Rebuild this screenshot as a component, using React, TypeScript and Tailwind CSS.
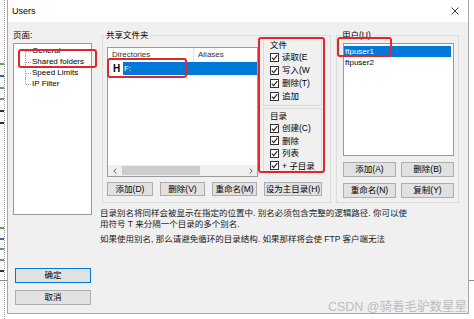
import React from "react";

const FONT = "font-['Liberation_Sans','Noto_Sans_CJK_SC',sans-serif]";

const Check = () => (
  <svg width="9" height="9" viewBox="0 0 9 9" className="shrink-0">
    <rect x="0.5" y="0.5" width="8" height="8" fill="white" stroke="#333" />
    <path d="M1.8 4.6 L3.7 6.6 L7.3 2.2" fill="none" stroke="#222" strokeWidth="1.1" />
  </svg>
);

const CheckRow = ({ label, h = "h-[13px]" }: { label: string; h?: string }) => (
  <div className={`flex ${h} items-center gap-[3px]`}>
    <Check />
    <span className="whitespace-nowrap text-[8.5px] leading-none">{label}</span>
  </div>
);

const TreeRow = ({ label, pos }: { label: string; pos: "first" | "mid" | "last" }) => (
  <div className="flex h-[11px] items-center">
    <div className="relative h-full w-[18px] shrink-0">
      <div
        className={`absolute left-[11px] w-0 border-l border-dotted border-[#a0a0a0] ${
          pos === "first" ? "top-1/2 bottom-0" : pos === "last" ? "top-0 h-1/2" : "top-0 bottom-0"
        }`}
      />
      <div className="absolute left-[12px] top-1/2 w-[5px] border-t border-dotted border-[#a0a0a0]" />
    </div>
    <span className="whitespace-nowrap text-[8px] leading-none">{label}</span>
  </div>
);

const Btn = ({ label, w, h = "h-[14px]", focus = false }: { label: string; w: string; h?: string; focus?: boolean }) => (
  <div
    className={`${w} ${h} flex shrink-0 items-center justify-center border bg-[#e1e1e1] text-[8.5px] leading-none ${
      focus ? "border-[#0078d7]" : "border-[#adadad]"
    }`}
  >
    {label}
  </div>
);

const Red = ({ c }: { c: string }) => (
  <div className={`pointer-events-none absolute rounded-[3px] border-2 border-[#e3262b] ${c}`} />
);

export default function App() {
  const marks: { y: number; c: string }[] = [
    { y: 63, c: "bg-[#5aa05a]" },
    { y: 75, c: "bg-[#4a5aa8]" },
    { y: 87, c: "bg-[#5aa05a]" },
    { y: 98, c: "bg-[#5aa05a]" },
    { y: 110, c: "bg-[#333]" },
    { y: 122, c: "bg-[#333]" },
    { y: 227, c: "bg-[#5aa05a]" },
    { y: 238, c: "bg-[#4a5aa8]" },
    { y: 248, c: "bg-[#5aa05a]" },
    { y: 259, c: "bg-[#5aa05a]" },
    { y: 270, c: "bg-[#333]" },
  ];
  return (
    <div className={`flex h-[319px] w-[474px] overflow-hidden bg-white text-black ${FONT}`}>
      {/* left desktop strip */}
      <div className="relative h-full w-[7px] shrink-0">
        <div className="absolute left-[4px] top-0 h-full border-l border-dotted border-[#9a9a9a]" />
        {marks.map((m, i) => (
          <div key={i} className={`absolute left-0 h-[2px] w-[4px] ${m.c}`} style={{ top: m.y }} />
        ))}
        <div className="absolute left-0 top-[280px] h-px w-[7px] bg-[#8a8a8a]" />
      </div>

      {/* dialog */}
      <div className="relative flex h-[314px] w-[462px] shrink-0 flex-col border border-t-0 border-[#a7a7a7] bg-[#f0f0f0]">
        {/* title bar */}
        <div className="flex h-[22px] shrink-0 items-center justify-between bg-white pl-[4px] pr-[9px]">
          <span className="text-[9px] leading-none">Users</span>
          <svg width="8" height="8" viewBox="0 0 8 8">
            <path d="M0.5 0.5 L7.5 7.5 M7.5 0.5 L0.5 7.5" stroke="#222" strokeWidth="0.9" />
          </svg>
        </div>

        {/* body */}
        <div className="flex flex-1">
          {/* left column */}
          <div className="flex w-[89px] shrink-0 flex-col pl-[5px]">
            <div className="mt-[7px] h-[13px] text-[8.5px] leading-[13px]">页面:</div>
            <div className="mt-[1px] h-[172px] w-[79px] border border-[#9a9a9a] bg-white pt-[1px]">
              <TreeRow label="General" pos="first" />
              <TreeRow label="Shared folders" pos="mid" />
              <TreeRow label="Speed Limits" pos="mid" />
              <TreeRow label="IP Filter" pos="last" />
            </div>
            <div className="ml-[2px] mt-[53px]">
              <Btn label="确定" w="w-[76px]" h="h-[15px]" focus />
            </div>
            <div className="ml-[2px] mt-[7px]">
              <Btn label="取消" w="w-[76px]" h="h-[15px]" />
            </div>
          </div>

          {/* right area */}
          <div className="flex flex-1 flex-col">
            <div className="ml-[5px] flex items-start gap-[5px]">
              {/* shared folders */}
              <fieldset className="mt-[7px] w-[229px] border border-[#dcdcdc] px-[3px] pb-[6px]">
                <legend className="pr-[2px] text-[8.5px] leading-[13px]">共享文件夹</legend>
                <div className="flex items-start">
                  <div className="ml-[1px] mt-[5px] flex h-[130px] w-[151px] flex-col border border-[#9a9a9a] bg-white">
                    <div className="flex h-[13px] shrink-0 text-[8px] leading-none text-[#333]">
                      <div className="flex w-[86px] items-center border-r border-[#e3e3e3] pl-[4px]">Directories</div>
                      <div className="flex items-center pl-[4px]">Aliases</div>
                    </div>
                    <div className="mt-[1px] flex h-[13px] items-center pl-[5px]">
                      <span className="w-[10px] text-[10px] font-bold leading-none">H</span>
                      <div className="flex h-full flex-1 items-center bg-[#0078d7] pl-[1px] text-[8px] leading-none text-white">
                        F:
                      </div>
                    </div>
                    <div className="flex-1" />
                    <div className="flex h-[11px] items-center bg-[#f0f0f0]">
                      <div className="flex w-[13px] justify-center">
                        <svg width="4" height="6" viewBox="0 0 4 6">
                          <path d="M3.2 0.5 L0.8 3 L3.2 5.5" fill="none" stroke="#606060" strokeWidth="1" />
                        </svg>
                      </div>
                      <div className="ml-[1px] h-[9px] w-[78px] bg-[#cdcdcd]" />
                      <div className="flex-1" />
                      <div className="flex w-[13px] justify-center">
                        <svg width="4" height="6" viewBox="0 0 4 6">
                          <path d="M0.8 0.5 L3.2 3 L0.8 5.5" fill="none" stroke="#606060" strokeWidth="1" />
                        </svg>
                      </div>
                    </div>
                  </div>
                  {/* permissions */}
                  <div className="-mt-[4px] ml-[5px] flex w-[59px] flex-col gap-[2px]">
                    <div className="h-[68px] border border-[#dcdcdc] pl-[6px] pt-[1px]">
                      <div className="h-[11px] text-[8.5px] leading-[11px]">文件</div>
                      <CheckRow label="读取(E" />
                      <CheckRow label="写入(W" />
                      <CheckRow label="删除(T)" />
                      <CheckRow label="追加" />
                    </div>
                    <div className="h-[64px] border border-[#dcdcdc] pl-[6px] pt-[1px]">
                      <div className="h-[12px] text-[8.5px] leading-[12px]">目录</div>
                      <CheckRow label="创建(C)" h="h-[12.5px]" />
                      <CheckRow label="删除" h="h-[12.5px]" />
                      <CheckRow label="列表" h="h-[12.5px]" />
                      <CheckRow label="+ 子目录" h="h-[12.5px]" />
                    </div>
                  </div>
                </div>
                <div className="ml-[1px] mt-[5px] flex gap-[7px]">
                  <Btn label="添加(D)" w="w-[46px]" />
                  <Btn label="删除(V)" w="w-[45px]" />
                  <Btn label="重命名(M)" w="w-[45px]" />
                  <Btn label="设为主目录(H)" w="w-[58px]" />
                </div>
              </fieldset>

              {/* users */}
              <fieldset className="mt-[7px] w-[123px] border border-[#dcdcdc] pb-[4px] pl-[5px] pr-[3px]">
                <legend className="pr-[2px] text-[8.5px] leading-[13px]">用户(U)</legend>
                <div className="ml-[1px] mt-[1px] h-[113px] w-[111px] border border-[#9a9a9a] bg-white pt-[2px] text-[8px] leading-none">
                  <div className="mr-[2px] flex h-[11px] items-center bg-[#0078d7] pl-[1px] text-white">ftpuser1</div>
                  <div className="flex h-[11px] items-center pl-[1px]">ftpuser2</div>
                </div>
                <div className="ml-[1px] mt-[6px] flex gap-[5px]">
                  <Btn label="添加(A)" w="w-[53px]" h="h-[15px]" />
                  <Btn label="删除(B)" w="w-[53px]" h="h-[15px]" />
                </div>
                <div className="ml-[1px] mt-[6px] flex gap-[5px]">
                  <Btn label="重命名(N)" w="w-[53px]" h="h-[15px]" />
                  <Btn label="复制(Y)" w="w-[53px]" h="h-[15px]" />
                </div>
              </fieldset>
            </div>

            {/* description */}
            <div className="mt-[5px] pl-[3px] text-[8.5px] text-[#1a1a1a]">
              <div className="h-[11px] whitespace-nowrap leading-[11px]">
                目录别名将同样会被显示在指定的位置中. 别名必须包含完整的逻辑路径. 你可以使
              </div>
              <div className="h-[11px] whitespace-nowrap leading-[11px]">用符号 T 来分隔一个目录的多个别名.</div>
              <div className="mt-[4px] h-[11px] whitespace-nowrap leading-[11px]">
                如果使用别名, 那么请避免循环的目录结构. 如果那样将会使 FTP 客户端无法
              </div>
            </div>
          </div>
        </div>

        {/* annotations */}
        <Red c="left-[10px] top-[49px] h-[19px] w-[79px]" />
        <Red c="left-[99px] top-[58px] h-[20px] w-[80px]" />
        <Red c="left-[250px] top-[37px] h-[136px] w-[67px]" />
        <Red c="left-[329px] top-[37px] h-[20px] w-[55px]" />

        {/* watermark */}
        <div className="pointer-events-none absolute right-[1px] top-[300px] whitespace-nowrap text-[12.5px] leading-[14px] text-[#bdbdbd]">
          CSDN @骑着毛驴数星星
        </div>
      </div>

      {/* right desktop strip */}
      <div className="relative h-full flex-1">
        <div className="absolute left-0 top-[280px] h-px w-full bg-[#8a8a8a]" />
      </div>
    </div>
  );
}
